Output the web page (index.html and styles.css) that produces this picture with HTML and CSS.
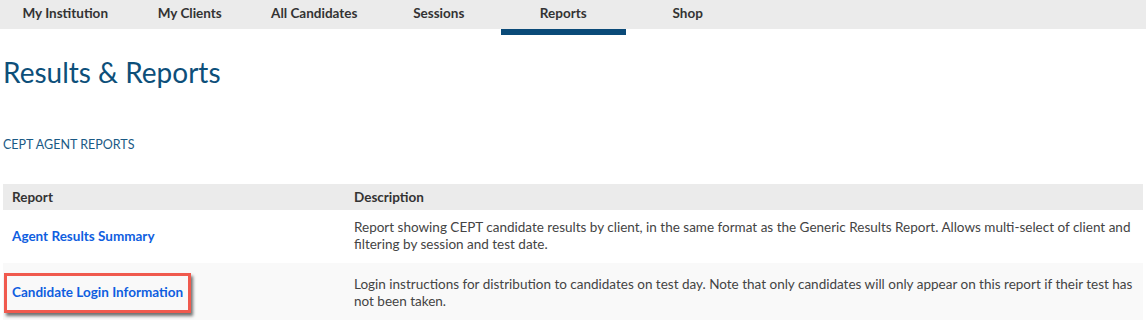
FILE: index.html
```html
<!DOCTYPE html>
<html>
<head>
<meta charset="utf-8">
<link rel="stylesheet" href="styles.css">
</head>
<body>
<nav class="nav">
  <a class="tab">My Institution</a>
  <a class="tab">My Clients</a>
  <a class="tab">All Candidates</a>
  <a class="tab">Sessions</a>
  <a class="tab active">Reports</a>
  <a class="tab">Shop</a>
</nav>
<main class="content">
  <h1 class="title">Results &amp; Reports</h1>
  <h2 class="section">CEPT AGENT REPORTS</h2>
  <table class="reports">
    <thead>
      <tr><th class="col-report">Report</th><th>Description</th></tr>
    </thead>
    <tbody>
      <tr>
        <td><a class="link">Agent Results Summary</a></td>
        <td>Report showing CEPT candidate results by client, in the same format as the Generic Results Report. Allows multi-select of client and filtering by session and test date.</td>
      </tr>
      <tr class="alt">
        <td><span class="highlight"><a class="link">Candidate Login Information</a></span></td>
        <td>Login instructions for distribution to candidates on test day. Note that only candidates will only appear on this report if their test has not been taken.</td>
      </tr>
    </tbody>
  </table>
</main>
</body>
</html>
```
FILE: styles.css
```css
html, body { margin: 0; padding: 0; background: #fff; }
body { font-family: Lato, "Liberation Sans", sans-serif; color: #444; }
.nav {
  display: flex;
  height: 29px;
  background: #ebebeb;
  padding-left: 3px;
}
.tab {
  width: 124.5px;
  text-align: center;
  font-size: 13.5px;
  font-weight: 700;
  color: #333;
  line-height: 26px;
  position: relative;
}
.tab.active::after {
  content: "";
  position: absolute;
  left: 0; right: 0;
  top: 29px;
  height: 6px;
  background: #0a4a78;
}
.content { padding: 0 3px; }
.title {
  margin: 0;
  padding-top: 24px;
  font-size: 28px;
  font-weight: 400;
  color: #0d4f7a;
  line-height: 38px;
}
.section {
  margin: 45px 0 0;
  font-size: 12.5px;
  font-weight: 400;
  color: #1a5a85;
  line-height: 18px;
}
.reports {
  margin-top: 30px;
  width: 100%;
  border-collapse: collapse;
  font-size: 13.5px;
}
.reports th {
  background: #ebebeb;
  text-align: left;
  font-weight: 700;
  color: #333;
  height: 26px;
  padding: 0 9px;
}
.col-report { width: 324px; }
.reports td {
  padding: 9px 9px 10px;
  line-height: 17px;
  vertical-align: middle;
}
.reports tr.alt td { background: #f9f9f9; padding-top: 10px; padding-bottom: 11px; }
.link {
  color: #0f5ee0;
  font-weight: 700;
}
.highlight {
  display: inline-block;
  margin-left: -8px;
  padding: 8px 5px 9px;
  border: 3px solid #f05a4e;
  box-shadow: 2px 3px 3px rgba(0,0,0,0.55);
}
```
